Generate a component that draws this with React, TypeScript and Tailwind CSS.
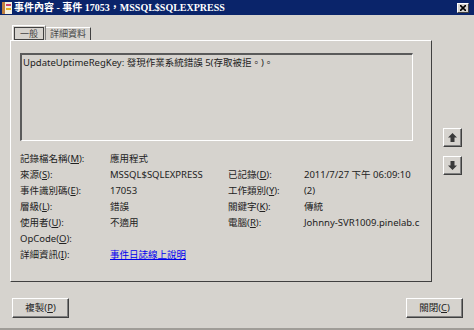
import React from 'react';

const Key: React.FC<{ label: string; k: string }> = ({ label, k }) => (
  <span>
    {label}(<span className="underline">{k}</span>):
  </span>
);

const ArrowButton: React.FC<{ down?: boolean }> = ({ down }) => (
  <div className="w-[19px] h-[19px] bg-[#d6d3ce] border-t border-l border-t-white border-l-white border-r border-b border-r-[#404040] border-b-[#404040] shadow-[inset_-1px_-1px_0_#808080] flex items-center justify-center">
    <svg width="9" height="9" viewBox="0 0 9 9" className={down ? 'rotate-180' : ''}>
      <path d="M4.5 0 L9 4.5 L6.5 4.5 L6.5 9 L2.5 9 L2.5 4.5 L0 4.5 Z" fill="#3a3a3a" />
    </svg>
  </div>
);

const DlgButton: React.FC<{ label: string; k: string }> = ({ label, k }) => (
  <div className="w-[57px] h-[20px] bg-[#d6d3ce] border-t border-l border-t-white border-l-white border-r border-b border-r-[#404040] border-b-[#404040] shadow-[inset_-1px_-1px_0_#808080] flex items-center justify-center text-[9.5px] text-[#222]">
    {label}(<span className="underline">{k}</span>)
  </div>
);

export default function App() {
  const left = [
    { label: '記錄檔名稱', k: 'M', value: '應用程式' },
    { label: '來源', k: 'S', value: 'MSSQL$SQLEXPRESS' },
    { label: '事件識別碼', k: 'E', value: '17053' },
    { label: '層級', k: 'L', value: '錯誤' },
    { label: '使用者', k: 'U', value: '不適用' },
  ];
  // the computer name is cut off by the dialog in the original
  const right = [
    null,
    { label: '已記錄', k: 'D', value: '2011/7/27 下午 06:09:10' },
    { label: '工作類別', k: 'Y', value: '(2)' },
    { label: '關鍵字', k: 'K', value: '傳統' },
    { label: '電腦', k: 'R', value: 'Johnny-SVR1009.pinelab.c' },
  ];

  return (
    <div
      className="w-[474px] h-[330px] bg-[#d6d3ce] flex flex-col overflow-hidden border-b-2 border-b-[#a09d98]"
      style={{ fontFamily: '"Noto Sans", "Noto Sans CJK TC", sans-serif' }}
    >
      {/* title bar */}
      <div className="h-[15px] bg-[#0a246a] flex items-center pl-[2px] pr-[5px]">
        <svg width="10" height="12" viewBox="0 0 10 12" className="mr-[2px]">
          <rect x="0" y="0" width="10" height="12" fill="#f4f0e0" />
          <rect x="0" y="0" width="3" height="12" fill="#c08040" />
          <rect x="4" y="2" width="5" height="2" fill="#d04070" />
          <rect x="4" y="6" width="5" height="2" fill="#e8b020" />
        </svg>
        <span
          className="text-white text-[10px] font-bold leading-none"
          style={{ fontFamily: '"Liberation Serif", "Noto Sans CJK TC", serif' }}
        >
          事件內容 - 事件 17053，MSSQL$SQLEXPRESS
        </span>
        <div className="ml-auto w-[12px] h-[10px] bg-[#d6d3ce] border-t border-l border-white border-r border-b border-r-[#404040] border-b-[#404040] flex items-center justify-center">
          <svg width="6" height="6" viewBox="0 0 6 6">
            <path d="M0 0 L6 6 M6 0 L0 6" stroke="#000" strokeWidth="1.6" />
          </svg>
        </div>
      </div>

      {/* tabs */}
      <div className="h-[25px] pl-[12px] flex items-end text-[9px] text-[#444]">
        <div className="h-[15px] w-[34px] border-t border-l border-t-white border-l-white border-r border-r-[#808080] flex items-center justify-center">
          <span className="px-[5px] leading-[11px] whitespace-nowrap border border-[#404040]">一般</span>
        </div>
        <div className="h-[13px] w-[45px] border-t border-t-white border-r border-r-[#404040] flex items-center justify-center whitespace-nowrap">
          詳細資料
        </div>
      </div>

      {/* panel + arrows */}
      <div className="flex pl-[10px]">
        <div className="w-[422px] h-[242px] border-t border-l border-t-white border-l-white border-r border-b border-r-[#404040] border-b-[#404040] pt-[12px] pl-[9px] flex flex-col">
          <div className="w-[393px] h-[88px] border-t-2 border-l-2 border-t-[#5a5a5a] border-l-[#5a5a5a] border-r border-b border-r-white border-b-white pl-[1px] pt-[1px] text-[9.5px] text-[#222] leading-[14px]">
            UpdateUptimeRegKey: 發現作業系統錯誤 5(存取被拒。)。
          </div>
          <div className="mt-[10px] grid grid-cols-[90px_118px_76px_113px] text-[9.5px] text-[#222] leading-[16px]">
            {left.map((row, i) => (
              <React.Fragment key={row.k}>
                <div className="whitespace-nowrap">
                  <Key label={row.label} k={row.k} />
                </div>
                <div className="whitespace-nowrap">{row.value}</div>
                <div className="whitespace-nowrap">
                  {right[i] && <Key label={right[i]!.label} k={right[i]!.k} />}
                </div>
                <div className="whitespace-nowrap">{right[i]?.value}</div>
              </React.Fragment>
            ))}
            <div className="whitespace-nowrap col-span-4">
              OpCode(<span className="underline">O</span>):
            </div>
            <div className="whitespace-nowrap">
              詳細資訊(<span className="underline">I</span>):
            </div>
            <div className="whitespace-nowrap col-span-3 text-[#0000ee] underline">事件日誌線上說明</div>
          </div>
        </div>
        <div className="ml-[11px] pt-[88px] flex flex-col gap-[9px]">
          <ArrowButton />
          <ArrowButton down />
        </div>
      </div>

      {/* buttons */}
      <div className="mt-[16px] flex pl-[12px] pr-[11px] justify-between">
        <DlgButton label="複製" k="P" />
        <DlgButton label="關閉" k="C" />
      </div>
    </div>
  );
}
